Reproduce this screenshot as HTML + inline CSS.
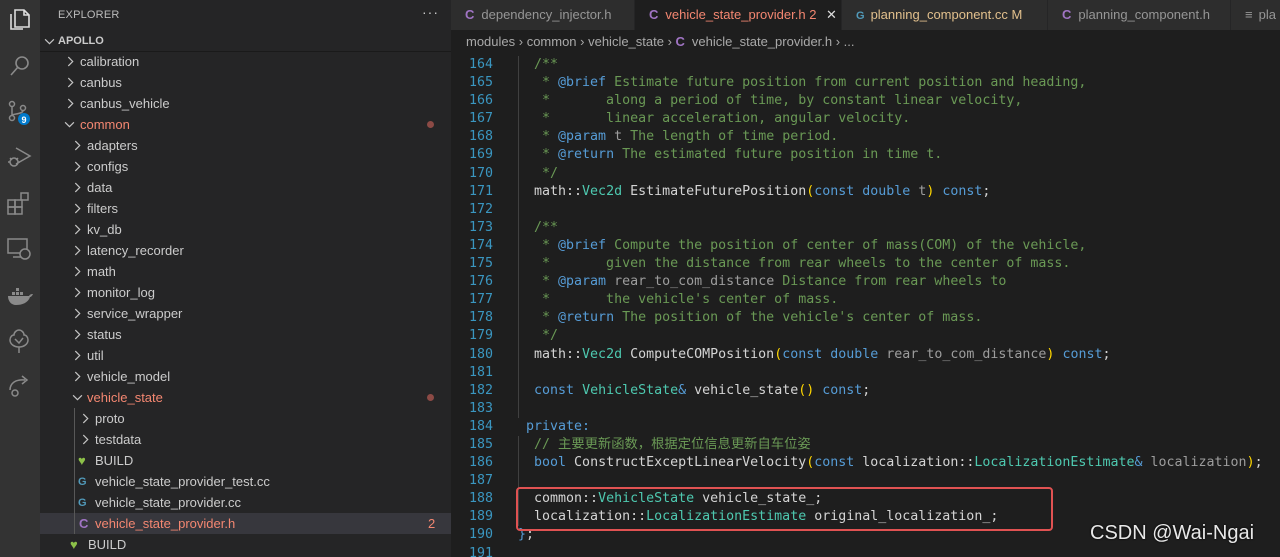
<!DOCTYPE html>
<html><head><meta charset="utf-8"><style>
*{margin:0;padding:0;box-sizing:border-box}
html,body{width:1280px;height:557px;overflow:hidden}
body{background:#1e1e1e;font-family:"Liberation Sans","Noto Sans CJK SC",sans-serif;position:relative}
#act{position:absolute;left:0;top:0;width:40px;height:557px;background:#333333}
#act svg{position:absolute;left:6px}
#side{position:absolute;left:40px;top:0;width:411px;height:557px;background:#252526}
.hdr{position:absolute;left:18px;top:9px;font-size:11px;color:#bbb;letter-spacing:.2px}
.dots{position:absolute;left:382px;top:4px;color:#ccc;font-size:14px;letter-spacing:1px}
.row{position:absolute;left:0;width:411px;height:21px;font-size:13px;color:#ccc;line-height:21px;white-space:nowrap}
.row .t{position:absolute}
.chev{position:absolute;top:5px}
.red{color:#f48771}
.dot{position:absolute;left:387px;top:7px;width:7px;height:7px;border-radius:50%;background:#8c4a45}
.guide{position:absolute;width:1px;background:#585858}
#tabs{position:absolute;left:451px;top:0;width:829px;height:30px;background:#252526}
.tab{position:absolute;top:0;height:30px;background:#2d2d2d;color:#969696;font-size:13px;line-height:30px;white-space:nowrap;padding-left:14px;border-right:1px solid #252526}
.ci{color:#a074c4;font-weight:bold;margin-right:7px}
.cp{color:#519aba;font-size:11px;font-weight:bold;margin-right:6px}
#bc{position:absolute;left:451px;top:30px;width:829px;height:24px;color:#a9a9a9;font-size:13px;line-height:24px;padding-left:15px;white-space:nowrap}
#code{position:absolute;left:451px;top:56px;width:829px;font-family:"DejaVu Sans Mono","Noto Sans CJK SC",monospace;font-size:13.3px}
.ln{height:18.1px;line-height:18.1px;white-space:pre;position:relative}
.ln .n{position:absolute;left:0;width:42px;text-align:right;color:#3a96c0}
.ln .c{position:absolute;left:67px;color:#d4d4d4}
.ln .cm,.cm{color:#6a9955}.ln .kw,.kw{color:#569cd6}.ty{color:#4ec9b0}.gr{color:#9d9d9d}.br{color:#ffd700}
#box{position:absolute;left:516px;top:487px;width:537px;height:44px;border:2px solid #e05252;border-radius:4px}
#wm{position:absolute;left:1090px;top:522px;font-size:20px;color:#e8e8e8;text-shadow:0 0 2px #000;white-space:nowrap}
</style></head><body>
<svg width="0" height="0" style="position:absolute"><defs>
<symbol id="r" viewBox="0 0 10 10"><path d="M3 1l4 4-4 4" fill="none" stroke="#c5c5c5" stroke-width="1.1"/></symbol>
<symbol id="d" viewBox="0 0 10 10"><path d="M1 3l4 4 4-4" fill="none" stroke="#c5c5c5" stroke-width="1.1"/></symbol>
</defs></svg>
<div id="act">
<svg style="top:5px" width="28" height="28" viewBox="0 0 28 28" fill="none" stroke="#ddd" stroke-width="1.6"><path d="M9 5h9l5 5v12H9z M18 5v5h5"/><path d="M5 9v15h12"/></svg>
<svg style="top:52px" width="28" height="28" viewBox="0 0 28 28" fill="none" stroke="#8a8a8a" stroke-width="1.6"><circle cx="16" cy="11" r="6"/><path d="M12 15l-7 8"/></svg>
<svg style="top:98px" width="28" height="30" viewBox="0 0 28 30" fill="none" stroke="#8a8a8a" stroke-width="1.5"><circle cx="6" cy="6" r="2.5"/><circle cx="6" cy="20" r="2.5"/><circle cx="17" cy="10" r="2.5"/><path d="M6 8.5v9M17 12.5c0 4-11 3-11 5"/><circle cx="18" cy="21" r="6" fill="#007acc" stroke="none"/><text x="18" y="25" fill="#fff" stroke="none" font-size="9" font-weight="bold" text-anchor="middle" font-family="Liberation Sans">9</text></svg>
<svg style="top:143px" width="28" height="28" viewBox="0 0 28 28" fill="none" stroke="#8a8a8a" stroke-width="1.5"><path d="M10 5l14 8-14 8"/><circle cx="8" cy="19" r="4"/><path d="M2 19h2M12 19h2M4 15l2 2M12 15l-2 2"/></svg>
<svg style="top:190px" width="28" height="28" viewBox="0 0 28 28" fill="none" stroke="#8a8a8a" stroke-width="1.5"><rect x="2" y="10" width="7" height="7"/><rect x="9" y="10" width="7" height="7"/><rect x="2" y="17" width="7" height="7"/><rect x="9" y="17" width="7" height="7"/><rect x="15" y="3" width="7" height="7"/></svg>
<svg style="top:236px" width="28" height="28" viewBox="0 0 28 28" fill="none" stroke="#8a8a8a" stroke-width="1.5"><rect x="2" y="3" width="19" height="14"/><path d="M7 21h9"/><circle cx="19" cy="18" r="5" fill="#333"/></svg>
<svg style="top:283px" width="28" height="28" viewBox="0 0 28 28" fill="#8a8a8a"><path d="M2 13h21c1-2 3-2 4-2-1 2-2 3-3 3-2 6-8 8-14 8-5 0-8-4-8-9z"/><rect x="6" y="9" width="3" height="3"/><rect x="10" y="9" width="3" height="3"/><rect x="14" y="9" width="3" height="3"/><rect x="10" y="5" width="3" height="3"/></svg>
<svg style="top:327px" width="28" height="28" viewBox="0 0 28 28" fill="none" stroke="#8a8a8a" stroke-width="1.5"><path d="M13 20c-5 0-9-3-9-7 0-3 2-5 4-5 0-3 3-5 5-5s5 2 5 5c2 0 4 2 4 5 0 4-4 7-9 7z M13 20v6M9 12l4 4 4-5"/></svg>
<svg style="top:372px" width="28" height="28" viewBox="0 0 28 28" fill="none" stroke="#8a8a8a" stroke-width="1.5"><path d="M4 18c0-7 6-11 15-10M16 4l5 4-5 4"/><circle cx="9" cy="21" r="3"/></svg>
</div>
<div id="side">
<div class="hdr">EXPLORER</div><div class="dots">···</div>
<div class="row" style="top:31px;font-weight:bold;font-size:11px;color:#ccc"><svg class="chev" style="left:4px" width="11" height="11"><use href="#d"/></svg><span class="t" style="left:18px">APOLLO</span></div>
<div style="position:absolute;left:0;top:51px;width:411px;height:1px;background:#1a1a1a"></div>
<div class="row" style="top:51px"><svg class="chev" style="left:25px" width="11" height="11"><use href="#r"/></svg><span class="t" style="left:40px">calibration</span></div>
<div class="row" style="top:72px"><svg class="chev" style="left:25px" width="11" height="11"><use href="#r"/></svg><span class="t" style="left:40px">canbus</span></div>
<div class="row" style="top:93px"><svg class="chev" style="left:25px" width="11" height="11"><use href="#r"/></svg><span class="t" style="left:40px">canbus_vehicle</span></div>
<div class="row red" style="top:114px"><svg class="chev" style="left:24px" width="11" height="11"><use href="#d"/></svg><span class="t" style="left:40px">common</span><span class="dot"></span></div>
<div class="row" style="top:135px"><svg class="chev" style="left:32px" width="11" height="11"><use href="#r"/></svg><span class="t" style="left:47px">adapters</span></div>
<div class="row" style="top:156px"><svg class="chev" style="left:32px" width="11" height="11"><use href="#r"/></svg><span class="t" style="left:47px">configs</span></div>
<div class="row" style="top:177px"><svg class="chev" style="left:32px" width="11" height="11"><use href="#r"/></svg><span class="t" style="left:47px">data</span></div>
<div class="row" style="top:198px"><svg class="chev" style="left:32px" width="11" height="11"><use href="#r"/></svg><span class="t" style="left:47px">filters</span></div>
<div class="row" style="top:219px"><svg class="chev" style="left:32px" width="11" height="11"><use href="#r"/></svg><span class="t" style="left:47px">kv_db</span></div>
<div class="row" style="top:240px"><svg class="chev" style="left:32px" width="11" height="11"><use href="#r"/></svg><span class="t" style="left:47px">latency_recorder</span></div>
<div class="row" style="top:261px"><svg class="chev" style="left:32px" width="11" height="11"><use href="#r"/></svg><span class="t" style="left:47px">math</span></div>
<div class="row" style="top:282px"><svg class="chev" style="left:32px" width="11" height="11"><use href="#r"/></svg><span class="t" style="left:47px">monitor_log</span></div>
<div class="row" style="top:303px"><svg class="chev" style="left:32px" width="11" height="11"><use href="#r"/></svg><span class="t" style="left:47px">service_wrapper</span></div>
<div class="row" style="top:324px"><svg class="chev" style="left:32px" width="11" height="11"><use href="#r"/></svg><span class="t" style="left:47px">status</span></div>
<div class="row" style="top:345px"><svg class="chev" style="left:32px" width="11" height="11"><use href="#r"/></svg><span class="t" style="left:47px">util</span></div>
<div class="row" style="top:366px"><svg class="chev" style="left:32px" width="11" height="11"><use href="#r"/></svg><span class="t" style="left:47px">vehicle_model</span></div>
<div class="row red" style="top:387px"><svg class="chev" style="left:32px" width="11" height="11"><use href="#d"/></svg><span class="t" style="left:47px">vehicle_state</span><span class="dot"></span></div>
<div class="row" style="top:408px"><svg class="chev" style="left:40px" width="11" height="11"><use href="#r"/></svg><span class="t" style="left:55px">proto</span></div>
<div class="row" style="top:429px"><svg class="chev" style="left:40px" width="11" height="11"><use href="#r"/></svg><span class="t" style="left:55px">testdata</span></div>
<div class="row" style="top:450px"><span class="t" style="left:38px;color:#8dc149">♥</span><span class="t" style="left:55px">BUILD</span></div>
<div class="row" style="top:471px"><span class="t cp" style="left:38px;top:1px">G</span><span class="t" style="left:55px">vehicle_state_provider_test.cc</span></div>
<div class="row" style="top:492px"><span class="t cp" style="left:38px;top:1px">G</span><span class="t" style="left:55px">vehicle_state_provider.cc</span></div>
<div class="row red" style="top:513px;background:#37373d"><span class="t ci" style="left:39px">C</span><span class="t" style="left:55px">vehicle_state_provider.h</span><span class="t" style="left:388px">2</span></div>
<div class="row" style="top:534px"><span class="t" style="left:30px;color:#8dc149">♥</span><span class="t" style="left:48px">BUILD</span></div>
<div class="guide" style="left:34px;top:408px;height:126px"></div>
</div>
<div id="tabs">
<div class="tab" style="left:0;width:184px"><span class="ci">C</span>dependency_injector.h</div>
<div class="tab" style="left:184px;width:207px;background:#1e1e1e;color:#f48771"><span class="ci">C</span>vehicle_state_provider.h 2 <span style="color:#ddd;margin-left:6px">✕</span></div>
<div class="tab" style="left:391px;width:206px;color:#e2c08d"><span class="cp">G</span>planning_component.cc M</div>
<div class="tab" style="left:597px;width:183px"><span class="ci">C</span>planning_component.h</div>
<div class="tab" style="left:780px;width:60px"><span style="margin-right:6px">≡</span>pla</div>
</div>
<div id="bc">modules › common › vehicle_state › <span class="ci">C</span>vehicle_state_provider.h › ...</div>
<div id="code">
<div class="ln"><span class="n">164</span><span class="c cm">  /**</span></div>
<div class="ln"><span class="n">165</span><span class="c cm">   * <span class="kw">@brief</span> Estimate future position from current position and heading,</span></div>
<div class="ln"><span class="n">166</span><span class="c cm">   *       along a period of time, by constant linear velocity,</span></div>
<div class="ln"><span class="n">167</span><span class="c cm">   *       linear acceleration, angular velocity.</span></div>
<div class="ln"><span class="n">168</span><span class="c cm">   * <span class="kw">@param</span> <span class="gr">t</span> The length of time period.</span></div>
<div class="ln"><span class="n">169</span><span class="c cm">   * <span class="kw">@return</span> The estimated future position in time t.</span></div>
<div class="ln"><span class="n">170</span><span class="c cm">   */</span></div>
<div class="ln"><span class="n">171</span><span class="c">  math::<span class="ty">Vec2d</span> EstimateFuturePosition<span class="br">(</span><span class="kw">const double</span> <span class="gr">t</span><span class="br">)</span> <span class="kw">const</span>;</span></div>
<div class="ln"><span class="n">172</span></div>
<div class="ln"><span class="n">173</span><span class="c cm">  /**</span></div>
<div class="ln"><span class="n">174</span><span class="c cm">   * <span class="kw">@brief</span> Compute the position of center of mass(COM) of the vehicle,</span></div>
<div class="ln"><span class="n">175</span><span class="c cm">   *       given the distance from rear wheels to the center of mass.</span></div>
<div class="ln"><span class="n">176</span><span class="c cm">   * <span class="kw">@param</span> <span class="gr">rear_to_com_distance</span> Distance from rear wheels to</span></div>
<div class="ln"><span class="n">177</span><span class="c cm">   *       the vehicle's center of mass.</span></div>
<div class="ln"><span class="n">178</span><span class="c cm">   * <span class="kw">@return</span> The position of the vehicle's center of mass.</span></div>
<div class="ln"><span class="n">179</span><span class="c cm">   */</span></div>
<div class="ln"><span class="n">180</span><span class="c">  math::<span class="ty">Vec2d</span> ComputeCOMPosition<span class="br">(</span><span class="kw">const double</span> <span class="gr">rear_to_com_distance</span><span class="br">)</span> <span class="kw">const</span>;</span></div>
<div class="ln"><span class="n">181</span></div>
<div class="ln"><span class="n">182</span><span class="c">  <span class="kw">const</span> <span class="ty">VehicleState</span><span class="kw">&amp;</span> vehicle_state<span class="br">()</span> <span class="kw">const</span>;</span></div>
<div class="ln"><span class="n">183</span></div>
<div class="ln"><span class="n">184</span><span class="c kw"> private:</span></div>
<div class="ln"><span class="n">185</span><span class="c cm">  // 主要更新函数，根据定位信息更新自车位姿</span></div>
<div class="ln"><span class="n">186</span><span class="c">  <span class="kw">bool</span> ConstructExceptLinearVelocity<span class="br">(</span><span class="kw">const</span> localization::<span class="ty">LocalizationEstimate</span><span class="kw">&amp;</span> <span class="gr">localization</span><span class="br">)</span>;</span></div>
<div class="ln"><span class="n">187</span></div>
<div class="ln"><span class="n">188</span><span class="c">  common::<span class="ty">VehicleState</span> vehicle_state_;</span></div>
<div class="ln"><span class="n">189</span><span class="c">  localization::<span class="ty">LocalizationEstimate</span> original_localization_;</span></div>
<div class="ln"><span class="n">190</span><span class="c"><span class="kw">}</span>;</span></div>
<div class="ln"><span class="n">191</span></div>
</div>
<div class="guide" style="left:518px;top:56px;height:362px;background:#404040"></div>
<div class="guide" style="left:518px;top:436px;height:90px;background:#404040"></div>
<div id="box"></div>
<div id="wm">CSDN @Wai-Ngai</div>
</body></html>
